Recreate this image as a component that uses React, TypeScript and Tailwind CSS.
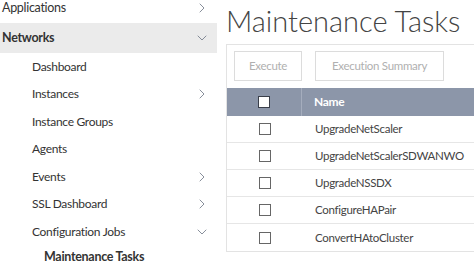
import React from "react";
import { ChevronRight, ChevronDown } from "lucide-react";

type NavItem = { label: string; chevron?: "right" | "down" };

const subItems: NavItem[] = [
  { label: "Dashboard" },
  { label: "Instances", chevron: "right" },
  { label: "Instance Groups" },
  { label: "Agents" },
  { label: "Events", chevron: "right" },
  { label: "SSL Dashboard", chevron: "right" },
  { label: "Configuration Jobs", chevron: "down" },
];

const tasks = [
  "UpgradeNetScaler",
  "UpgradeNetScalerSDWANWO",
  "UpgradeNSSDX",
  "ConfigureHAPair",
  "ConvertHAtoCluster",
];

const Chevron: React.FC<{ dir?: "right" | "down" }> = ({ dir }) => {
  if (!dir) return null;
  return dir === "right" ? (
    <ChevronRight size={16} strokeWidth={1.2} className="text-gray-500" />
  ) : (
    <ChevronDown size={16} strokeWidth={1.2} className="text-gray-500" />
  );
};

const App: React.FC = () => {
  return (
    <div
      className="w-[474px] h-[273px] overflow-hidden bg-white flex text-[#333]"
      style={{ fontFamily: 'Lato, "Noto Sans", sans-serif' }}
    >
      {/* Sidebar */}
      <aside className="w-[217px] shrink-0 flex flex-col -mt-[7px] text-[12px] tracking-[-0.3px]">
        <div className="h-[30px] shrink-0 flex items-center justify-between pl-[2px] pr-[7px] text-[12.5px]">
          <span>Applications</span>
          <Chevron dir="right" />
        </div>
        <div className="h-[30px] shrink-0 flex items-center justify-between pl-[2px] pr-[7px] bg-[#ebebeb] font-bold text-[12.5px]">
          <span>Networks</span>
          <Chevron dir="down" />
        </div>
        {subItems.map((item) => (
          <div
            key={item.label}
            className="h-[27.5px] shrink-0 flex items-center justify-between pl-[32px] pr-[7px]"
          >
            <span>{item.label}</span>
            <Chevron dir={item.chevron} />
          </div>
        ))}
        <div className="h-[24px] shrink-0 flex items-center pl-[44px] font-bold text-[12.5px]">
          Maintenance Tasks
        </div>
      </aside>

      <div className="w-px bg-[#f0f0f0] ml-[5px]" />

      {/* Main */}
      <main className="flex-1 flex flex-col pl-[4px]">
        <h1 className="text-[29px] leading-none font-light text-[#444] pt-[6px] h-[44px] whitespace-nowrap">
          Maintenance Tasks
        </h1>
        <div className="border border-[#e3e3e3] border-r-0 w-[260px] tracking-[-0.3px]">
          <div className="flex gap-[13px] pl-[7px] pt-[6px] pb-[7px]">
            <button className="h-[30px] w-[68px] border border-[#dcdcdc] text-[11.5px] text-[#b0b0b0]">
              Execute
            </button>
            <button className="h-[30px] w-[129px] border border-[#dcdcdc] text-[11.5px] text-[#b0b0b0]">
              Execution Summary
            </button>
          </div>
          <div className="h-[28px] bg-[#8c96a9] flex items-center text-white text-[12px] font-bold">
            <div className="w-[75px] h-full border-r border-[#a5adbd] flex items-center justify-center">
              <span className="w-[12px] h-[12px] bg-white border border-[#3a3f4a]" />
            </div>
            <span className="pl-[12px]">Name</span>
          </div>
          {tasks.map((t, i) => (
            <div
              key={t}
              className={`h-[27px] flex items-center text-[11.5px] text-[#444] ${
                i < tasks.length - 1 ? "border-b border-[#e6e6e6]" : ""
              }`}
            >
              <div className="w-[75px] flex items-center justify-center">
                <span className="w-[12px] h-[12px] border border-[#666]" />
              </div>
              <span className="pl-[13px]">{t}</span>
            </div>
          ))}
        </div>
      </main>
    </div>
  );
};

export default App;
